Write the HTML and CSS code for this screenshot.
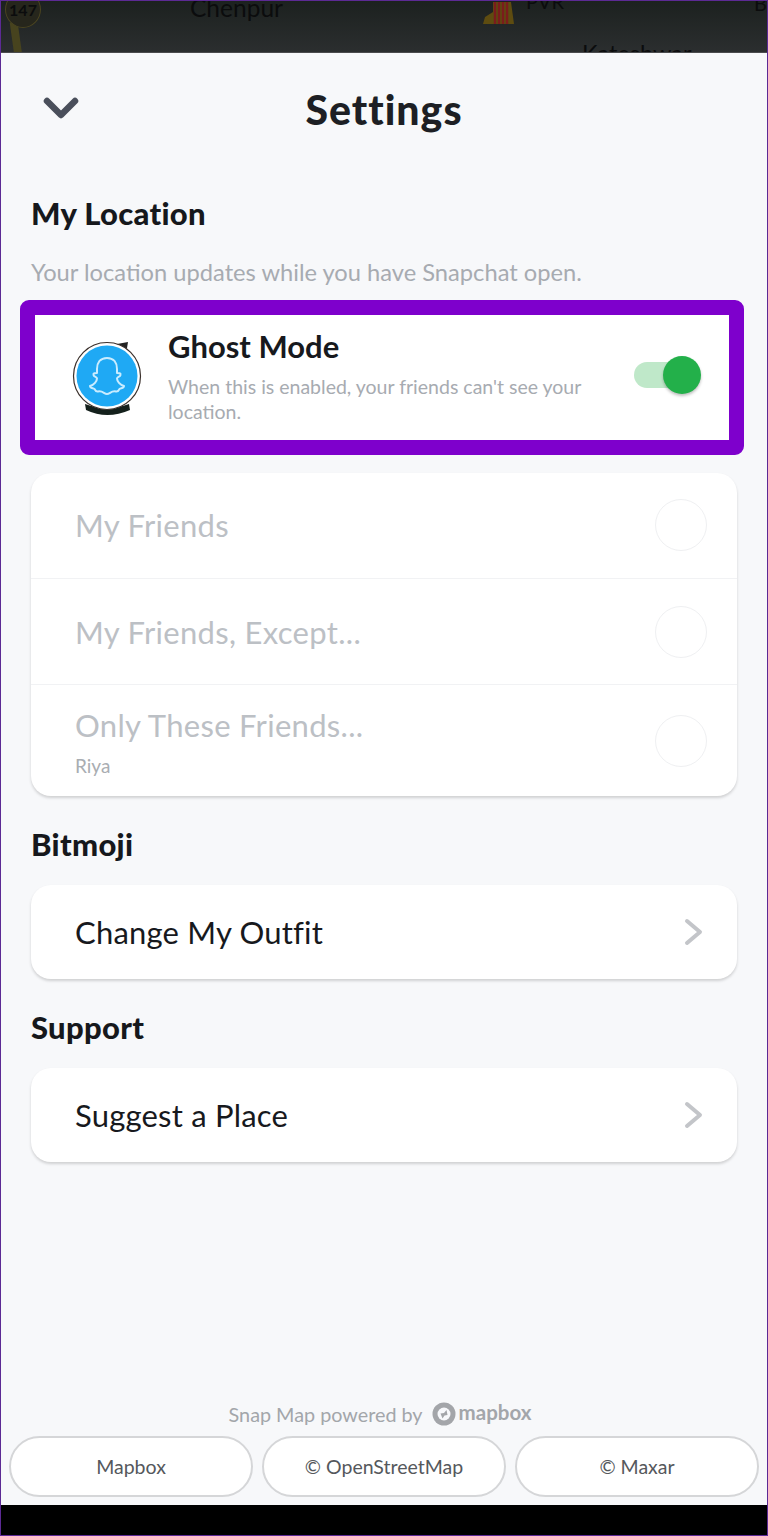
FILE: index.html
```html
<!DOCTYPE html>
<html lang="en">

<head>
    <meta charset="UTF-8">
    <meta name="viewport" content="width=device-width, initial-scale=1.0">
    <title>Settings</title>
    <link rel="stylesheet" href="styles.css">
</head>

<body>
    <div class="screen">
        <div class="map">
            <span class="road-stalk"></span>
            <span class="road-badge">147</span>
            <span class="map-label chenpur">Chenpur</span>
            <svg class="map-pin" width="33" height="23" viewBox="0 0 33 23">
                <path d="M1 22 L3 15 L11 10 L11 0 L29 0 L32 22 Z" fill="#5e4c10"/>
                <path d="M13 0v22M17 0v22M21 0v22M25 0v22" stroke="#7a1c1c" stroke-width="2.4"/>
            </svg>
            <span class="map-label pvr">PVR</span>
            <span class="map-label kate">Kateshwar</span>
            <span class="map-label edge">B</span>
        </div>

        <div class="sheet">
            <header class="sheet-header">
                <svg class="back" width="36" height="24" viewBox="0 0 36 24">
                    <path d="M4 5 L18 19 L32 5" fill="none" stroke="#4a4f5b" stroke-width="6.5" stroke-linecap="round" stroke-linejoin="round"/>
                </svg>
                <h1>Settings</h1>
            </header>

            <h2 class="location-title">My Location</h2>
            <p class="hint">Your location updates while you have Snapchat open.</p>

            <div class="highlight">
                <div class="avatar">
                    <svg width="70" height="76" viewBox="0 0 70 76">
                        <path d="M45 4 L56 2 L55 8 L47 8 Z" fill="#222"/>
                        <path d="M13 64 Q35 72 57 64 L58 70 Q35 80 14 70 Z" fill="#14201c"/>
                        <circle cx="35" cy="36" r="33.500" fill="#fff" stroke="#3a302c" stroke-width="1.200"/>
                        <circle cx="35" cy="36" r="30.500" fill="#1fa9f4"/>
                        <path d="M35 18 C42 18 45 23 45 29 L45 33 C47 33 49 33 48.500 35 C48 37 45 37 45 38.500 C45 41 48 45 52 46 C52 48.500 49 48 47.500 49 C46.500 51 46 52 44 51.500 C39 50.500 38 54 35 54 C32 54 31 50.500 26 51.500 C24 52 23.500 51 22.500 49 C21 48 18 48.500 18 46 C22 45 25 41 25 38.500 C25 37 22 37 21.500 35 C21 33 23 33 25 33 L25 29 C25 23 28 18 35 18 Z" fill="none" stroke="#c9ecff" stroke-width="2" stroke-linejoin="round"/>
                    </svg>
                </div>
                <div class="ghost-text">
                    <div class="ghost-title">Ghost Mode</div>
                    <div class="ghost-desc">When this is enabled, your friends can't see your location.</div>
                </div>
                <div class="toggle"><span class="knob"></span></div>
            </div>

            <div class="card options">
                <div class="option first">
                    <span class="option-name">My Friends</span>
                    <span class="radio"></span>
                </div>
                <div class="option">
                    <span class="option-name">My Friends, Except...</span>
                    <span class="radio"></span>
                </div>
                <div class="option last">
                    <div class="option-stack">
                        <div class="option-name">Only These Friends...</div>
                        <div class="option-sub">Riya</div>
                    </div>
                    <span class="radio"></span>
                </div>
            </div>

            <h2 class="section-title">Bitmoji</h2>
            <div class="card link-row">
                <span>Change My Outfit</span>
                <svg width="20" height="28" viewBox="0 0 20 28"><path d="M3 3 L16 14 L3 25" fill="none" stroke="#c3c5c9" stroke-width="4" stroke-linecap="round" stroke-linejoin="round"/></svg>
            </div>

            <h2 class="section-title">Support</h2>
            <div class="card link-row">
                <span>Suggest a Place</span>
                <svg width="20" height="28" viewBox="0 0 20 28"><path d="M3 3 L16 14 L3 25" fill="none" stroke="#c3c5c9" stroke-width="4" stroke-linecap="round" stroke-linejoin="round"/></svg>
            </div>

            <footer class="sheet-footer">
                <div class="powered">
                    <span>Snap Map powered by</span>
                    <svg width="24" height="24" viewBox="0 0 24 24">
                        <circle cx="12" cy="12" r="11.500" fill="#a3a5a9"/>
                        <circle cx="12" cy="12" r="6.500" fill="#f7f8fb"/>
                        <path d="M14.500 8 L15.500 13 L12.500 13.500 L10.500 16.500 L8.500 11.500 L12 11 Z" fill="#a3a5a9"/>
                    </svg>
                    <span class="mapbox">mapbox</span>
                </div>
                <div class="pills">
                    <div class="pill">Mapbox</div>
                    <div class="pill">© OpenStreetMap</div>
                    <div class="pill">© Maxar</div>
                </div>
            </footer>
        </div>

        <div class="nav-bar"></div>
    </div>
</body>

</html>
```

FILE: styles.css
```css
* {
    box-sizing: border-box;
}

html, body {
    margin: 0;
    padding: 0;
}

body {
    font-family: Lato, 'Open Sans', sans-serif;
    background: #000;
}

.screen {
    width: 768px;
    height: 1536px;
    display: flex;
    flex-direction: column;
    border: 1px solid #5c2a94;
    overflow: hidden;
}

/* dimmed map behind the sheet */
.map {
    position: relative;
    height: 52px;
    flex-shrink: 0;
    background: linear-gradient(to bottom, #1c211f, #2b2e2f);
    border-bottom: 1px solid #4b4c4e;
    overflow: hidden;
}

.map-label {
    position: absolute;
    font-size: 24.500px;
    color: #0b0c0d;
}

.chenpur {
    left: 189px;
    top: -8px;
}

.pvr {
    left: 525px;
    top: -12px;
    font-size: 20px;
}

.kate {
    left: 581px;
    top: 38px;
    font-size: 23.500px;
}

.edge {
    right: 0;
    top: -10px;
    font-size: 20px;
}

.map-pin {
    position: absolute;
    left: 481px;
    top: 1px;
}

.road-badge {
    position: absolute;
    left: 4px;
    top: -10px;
    width: 36px;
    height: 37px;
    display: flex;
    align-items: center;
    justify-content: center;
    border: 1.500px solid #4a4420;
    border-radius: 50%;
    background: #26261c;
    font-size: 16px;
    font-weight: 700;
    color: #0b0c0d;
}

.road-stalk {
    position: absolute;
    left: 11px;
    top: 22px;
    width: 8px;
    height: 32px;
    background: #47431e;
    transform: skewX(8deg);
}

.sheet {
    flex: 1;
    display: flex;
    flex-direction: column;
    background: #f7f8fa;
    padding: 0 30px 8px;
}

.sheet-header {
    position: relative;
    height: 114px;
    display: flex;
    align-items: center;
    justify-content: center;
}

.back {
    position: absolute;
    left: 12px;
    top: 43px;
}

h1 {
    margin: 0;
    font-size: 41px;
    font-weight: 900;
    letter-spacing: 1px;
    line-height: 46px;
    color: #1d1f24;
}

h2 {
    margin: 0;
    font-size: 31px;
    font-weight: 900;
    letter-spacing: 0.3px;
    line-height: 36px;
    color: #16181c;
}

.location-title {
    margin-top: 28px;
}

.hint {
    margin: 27px 0 1px;
    font-size: 23.700px;
    line-height: 28px;
    color: #a7abb1;
}

.highlight {
    display: flex;
    align-items: center;
    margin: 13px -7px 0 -11px;
    height: 155px;
    border: 15.500px solid #7e00cc;
    border-radius: 9px;
    background: #fff;
    padding: 0 39px 0 37px;
}

.avatar {
    width: 70px;
    height: 76px;
    margin-right: 26px;
}

.ghost-text {
    flex: 1;
    margin-top: -4px;
}

.ghost-title {
    font-size: 31px;
    font-weight: 700;
    line-height: 38px;
    color: #17191d;
}

.ghost-desc {
    width: 430px;
    margin-top: 9px;
    font-size: 19.500px;
    line-height: 25px;
    color: #a7abb1;
}

.toggle {
    position: relative;
    width: 56px;
    height: 26px;
    margin-top: -6px;
    border-radius: 13px;
    background: #bfe8c9;
}

.knob {
    position: absolute;
    right: -11px;
    top: -6px;
    width: 38px;
    height: 38px;
    border-radius: 50%;
    background: #23b04a;
    box-shadow: 0 2px 3px rgba(0, 0, 0, 0.25);
}

.card {
    background: #fff;
    border-radius: 20px;
    box-shadow: 0 2px 3px rgba(0, 0, 0, 0.16);
}

.options {
    margin-top: 18px;
    height: 323px;
}

.option {
    display: flex;
    align-items: center;
    justify-content: space-between;
    height: 106px;
    padding: 0 30px 0 44px;
    border-bottom: 1px solid #f1f2f4;
}

.option.first {
    padding-bottom: 2px;
}

.option.last {
    height: 111px;
    border-bottom: none;
}

.option-stack {
    padding-top: 2px;
}

.option-name {
    font-size: 31px;
    letter-spacing: 0.3px;
    color: #bcc0c5;
    line-height: 38px;
}

.option-sub {
    font-size: 19px;
    line-height: 24px;
    margin-top: 10px;
    color: #a9adb2;
}

.radio {
    width: 52px;
    height: 52px;
    border-radius: 50%;
    border: 1.500px solid #eff0f2;
    background: #fff;
}

.section-title {
    margin-top: 30px;
}

.link-row {
    display: flex;
    align-items: center;
    justify-content: space-between;
    height: 94px;
    margin-top: 23px;
    padding: 0 33px 0 44px;
    font-size: 31px;
    letter-spacing: 0.2px;
    color: #17191d;
}

.sheet-footer {
    margin-top: auto;
}

.powered {
    display: flex;
    align-items: center;
    justify-content: center;
    gap: 9px;
    font-size: 19.800px;
    color: #a3a6aa;
    margin: 0 8px 10px 0;
}

.mapbox {
    margin-left: -6px;
    margin-top: -4px;
    font-size: 20.500px;
    font-weight: 700;
}

.pills {
    display: flex;
    gap: 9px;
    margin: 0 -22px;
}

.pill {
    flex: 1;
    height: 61px;
    display: flex;
    align-items: center;
    justify-content: center;
    border: 2px solid #d5d6d8;
    border-radius: 31px;
    background: #fff;
    font-size: 19.500px;
    color: #55585c;
}

.nav-bar {
    height: 30px;
    flex-shrink: 0;
    background: #000;
}
```
